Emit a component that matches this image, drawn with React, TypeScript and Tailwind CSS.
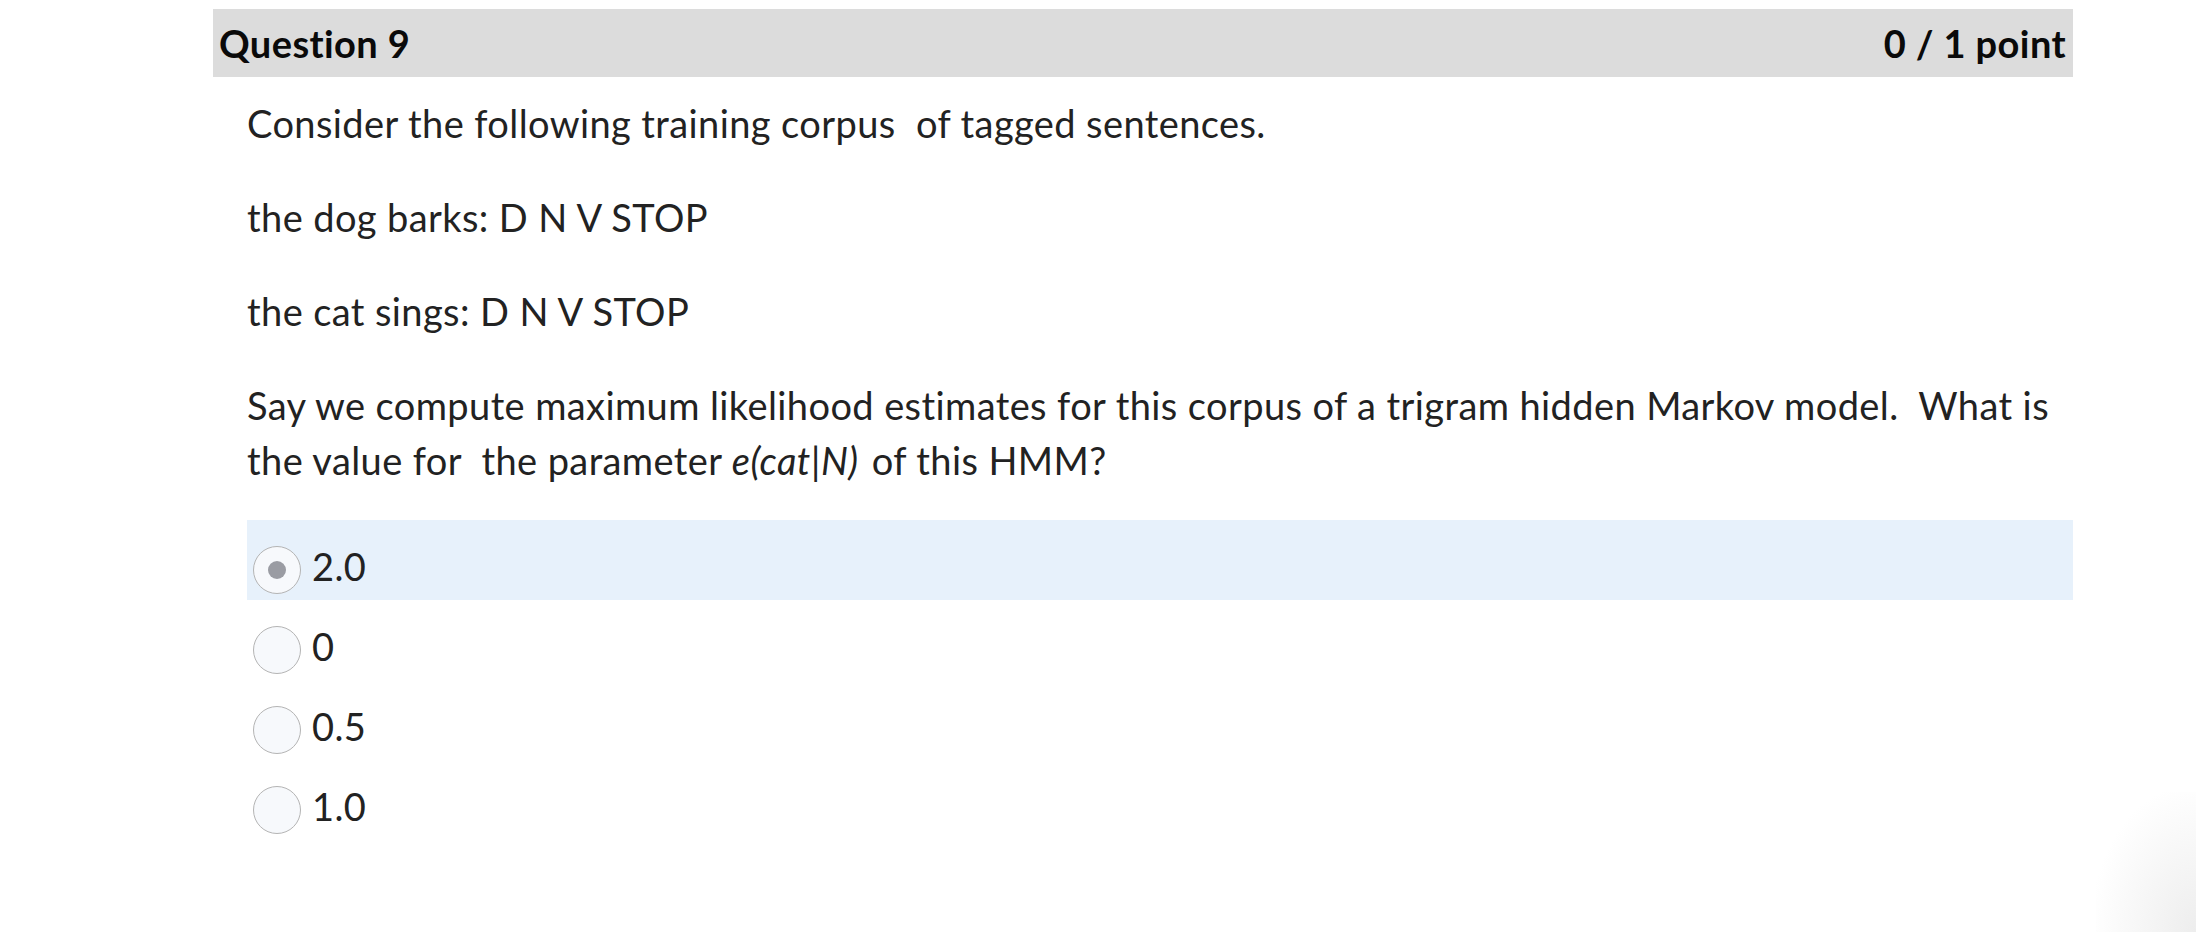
import React from "react";

const options = ["2.0", "0", "0.5", "1.0"];

export default function App() {
  return (
    <div className="relative min-h-[932px] w-full overflow-hidden bg-white font-['Lato','Noto_Sans',sans-serif] text-[#222222]">
      <div className="ml-[213px] w-[1860px] pt-[9px]">
        <div className="flex h-[68px] items-center justify-between bg-[#dcdcdc] pl-[6px] pr-[7px] text-[38px] font-bold tracking-[0.4px] text-[#0a0a0a]">
          <span>Question 9</span>
          <span>0 / 1 point</span>
        </div>
        <div className="pl-[34px] pt-[19px] text-[38px] leading-[55px] tracking-[0.4px]">
          <p className="mb-[39px]">Consider the following training corpus&nbsp; of tagged sentences.</p>
          <p className="mb-[39px]">the dog barks: D N V STOP</p>
          <p className="mb-[39px]">the cat sings: D N V STOP</p>
          <p>
            Say we compute maximum likelihood estimates for this corpus of a trigram hidden Markov model.&nbsp; What is
            the value for&nbsp; the parameter <i className="pr-[3px]">e(cat|N)</i> of this HMM?
          </p>
          <div className="mt-[32px]">
            {options.map((o, i) => (
              <div
                key={o}
                className={
                  i === 0
                    ? "flex h-[80px] items-center bg-[#e7f1fb] pt-[20px]"
                    : "flex h-[80px] items-center pt-[20px]"
                }
              >
                <div className="ml-[6px] flex h-[48px] w-[48px] items-center justify-center rounded-full border-[1.5px] border-[#b4b4b4] bg-[#f7f9fc]">
                  {i === 0 && <div className="h-[18px] w-[18px] rounded-full bg-[#9a9ca3]" />}
                </div>
                <span className="mb-[8px] ml-[11px] leading-[44px]">{o}</span>
              </div>
            ))}
          </div>
        </div>
      </div>
      <div className="pointer-events-none absolute bottom-0 right-0 h-[140px] w-[100px] bg-[radial-gradient(ellipse_at_100%_100%,#ededed_0%,rgba(255,255,255,0)_75%)]" />
    </div>
  );
}
